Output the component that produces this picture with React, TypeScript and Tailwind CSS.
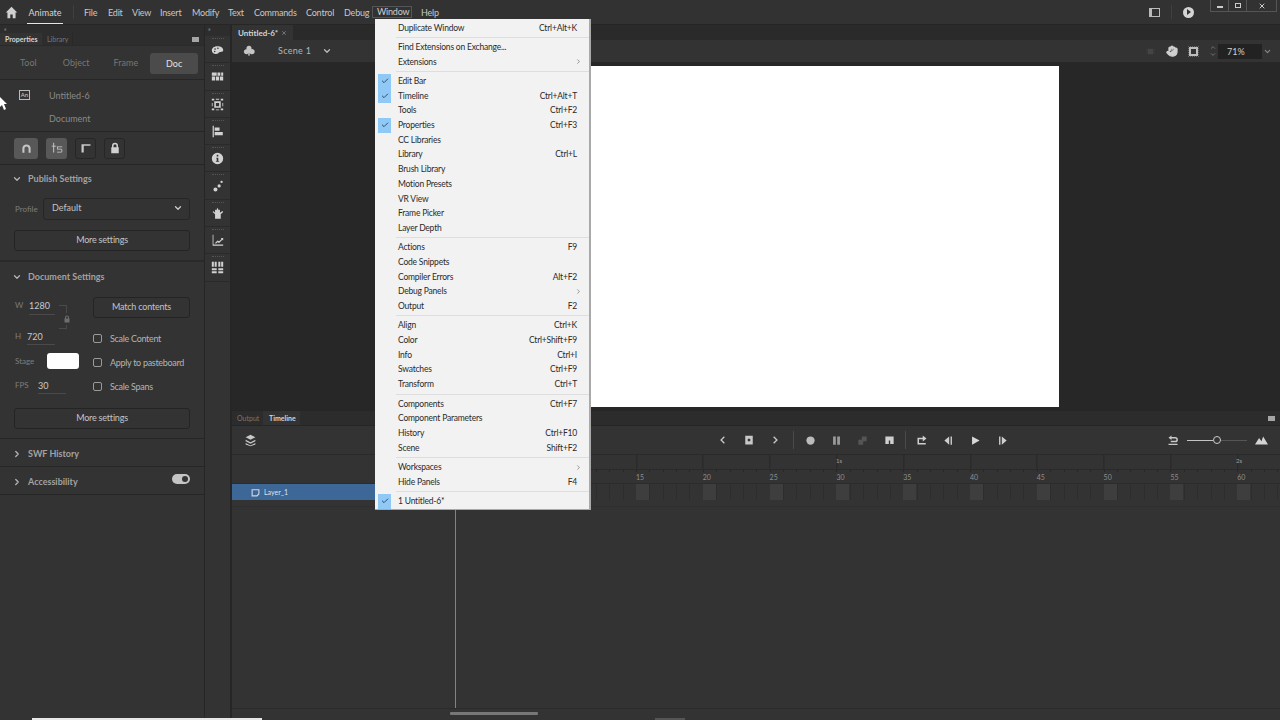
import { Check, ChevronDown, ChevronRight, ChevronUp, Hand, X } from "lucide-react";
import type { ReactNode } from "react";

const FONT = "font-['Lato',sans-serif]";

const topMenu: [string, string][] = [
	["File", "w-[24px]"],
	["Edit", "w-[24px]"],
	["View", "w-[28px]"],
	["Insert", "w-[32px]"],
	["Modify", "w-[36px]"],
	["Text", "w-[26px]"],
	["Commands", "w-[52px]"],
	["Control", "w-[38px]"],
	["Debug", "w-[36px]"],
];

type MenuRow = { label: string; keys?: string; checked?: boolean; sub?: boolean } | "sep";

const windowMenu: MenuRow[] = [
	{ label: "Duplicate Window", keys: "Ctrl+Alt+K" },
	"sep",
	{ label: "Find Extensions on Exchange..." },
	{ label: "Extensions", sub: true },
	"sep",
	{ label: "Edit Bar", checked: true },
	{ label: "Timeline", keys: "Ctrl+Alt+T", checked: true },
	{ label: "Tools", keys: "Ctrl+F2" },
	{ label: "Properties", keys: "Ctrl+F3", checked: true },
	{ label: "CC Libraries" },
	{ label: "Library", keys: "Ctrl+L" },
	{ label: "Brush Library" },
	{ label: "Motion Presets" },
	{ label: "VR View" },
	{ label: "Frame Picker" },
	{ label: "Layer Depth" },
	"sep",
	{ label: "Actions", keys: "F9" },
	{ label: "Code Snippets" },
	{ label: "Compiler Errors", keys: "Alt+F2" },
	{ label: "Debug Panels", sub: true },
	{ label: "Output", keys: "F2" },
	"sep",
	{ label: "Align", keys: "Ctrl+K" },
	{ label: "Color", keys: "Ctrl+Shift+F9" },
	{ label: "Info", keys: "Ctrl+I" },
	{ label: "Swatches", keys: "Ctrl+F9" },
	{ label: "Transform", keys: "Ctrl+T" },
	"sep",
	{ label: "Components", keys: "Ctrl+F7" },
	{ label: "Component Parameters" },
	{ label: "History", keys: "Ctrl+F10" },
	{ label: "Scene", keys: "Shift+F2" },
	"sep",
	{ label: "Workspaces", sub: true },
	{ label: "Hide Panels", keys: "F4" },
	"sep",
	{ label: "1 Untitled-6*", checked: true },
];

const Icon = ({ children, className = "w-3 h-3 text-[#c8c8c8]" }: { children: ReactNode; className?: string }) => (
	<svg viewBox="0 0 16 16" fill="currentColor" className={className}>
		{children}
	</svg>
);

const stripIcons: ReactNode[] = [
	<path key="a" fillRule="evenodd" d="M1 9c0-3 3-5 7-5s7 2 7 4.500-2 2-4 2.500-2 2.500-5 2.500S1 12 1 9zM4 7.500a1 1 0 102 0 1 1 0 10-2 0zM7.500 6.500a1 1 0 102 0 1 1 0 10-2 0zM3.500 10.500a1 1 0 102 0 1 1 0 10-2 0z" />,
	<path key="b" d="M1 3h6v4H1zM8 3h3.500v4H8zM12.500 3H15v4h-2.500zM1 8h4v5H1zM6 8h4v5H6zM11 8h4v5h-4z" />,
	<path key="c" fillRule="evenodd" d="M1 1h3v2H1zM12 1h3v2h-3zM1 13h3v2H1zM12 13h3v2h-3zM6 1h4v1H6zM6 14h4v1H6zM1 6h1v4H1zM14 6h1v4h-1zM4 4h8v8H4zM6 6v4h4V6z" />,
	<path key="d" d="M2 1h1.500v14H2zM4.500 3h6v4h-6zM4.500 8.500h10v4h-10z" />,
	<path key="e" fillRule="evenodd" d="M8 1a7 7 0 110 14A7 7 0 018 1zM7 3.500v2h2v-2zM6.500 7v1H7v3H6v1h4v-1H9V7z" />,
	<path key="f" d="M3 13a2.500 2.500 0 105 0 2.500 2.500 0 10-5 0zM8 8.500a2 2 0 104 0 2 2 0 10-4 0zM11.500 3.500a1.500 1.500 0 103 0 1.500 1.500 0 10-3 0z" />,
	<path key="g" d="M5 7V3l1.500 1L8 1l1.500 3L11 3v4l3-2 1 1-3 3v5.500H5V9L2 6l1-1z" />,
	<path key="h" fillRule="evenodd" d="M2 1h1v12h12v1.500H2zM5 11l3-3 2 1 3-3-1-1h3v3l-1-1-4 4-2-1-2 2z" />,
	<path key="i" fillRule="evenodd" d="M1 1h6v6H1zM9 1h6v6H9zM1 9h6v6H1zM9 9h6v6H9zM3.500 1v6h1V1zM11.500 1v6h1V1zM1 11.500v1h6v-1zM9 11.500v1h6v-1z" />,
];

const PanelBtn = ({ children, className = "" }: { children: ReactNode; className?: string }) => (
	<div className={`h-[21px] flex items-center justify-center rounded-[3px] border border-[#242424] text-[9px] tracking-[-0.2px] text-[#c4c4c4] ${className}`}>
		{children}
	</div>
);

const SectionHead = ({ label, open = true }: { label: string; open?: boolean }) => (
	<div className="flex items-center gap-[6px] pl-[12px] text-[9px] font-bold text-[#a2a2a2]">
		{open ? (
			<ChevronDown strokeWidth={3} className="w-[10px] h-[10px] text-[#b5b5b5]" />
		) : (
			<ChevronRight strokeWidth={3} className="w-[10px] h-[10px] text-[#b5b5b5]" />
		)}
		<span>{label}</span>
	</div>
);

const CheckRow = ({ label }: { label: string }) => (
	<div className="flex items-center gap-[8px] text-[9px] tracking-[-0.3px] text-[#b4b4b4] whitespace-nowrap">
		<span className="w-[9px] h-[9px] rounded-[2px] border border-[#9a9a9a]" />
		<span>{label}</span>
	</div>
);

const LeftPanel = () => (
	<div className="w-[205px] shrink-0 flex flex-col border-r border-[#262626] bg-[#333]">
		<div className="h-[8px] bg-[#2d2d2d] pl-[4px] text-[6px] leading-[8px] text-[#aaa]">«</div>
		<div className="h-[13px] flex bg-[#2d2d2d] items-stretch border-b border-[#2a2a2a] relative">
			<div className="w-[42px] bg-[#333] pl-[5px] text-[7px] leading-[13px] font-bold text-[#d5d5d5]">Properties</div>
			<div className="w-[31px] border-r border-[#282828] pl-[5px] text-[7px] leading-[13px] text-[#777]">Library</div>
			<div className="ml-auto mr-[5px] mt-[4px] w-[7px] h-[5px] bg-[#a5a5a5]" />
		</div>
		<div className="h-[34px] flex items-center border-b border-[#262626] pl-[6px] pr-[6px] pt-[1px] text-[9px] text-[#777]">
			<span className="w-[45px] text-center">Tool</span>
			<span className="w-[51px] text-center">Object</span>
			<span className="w-[49px] text-center">Frame</span>
			<span className="w-[48px] h-[21px] rounded-[3px] bg-[#4b4b4b] text-[#e2e2e2] leading-[21px] text-center">Doc</span>
		</div>
		<div className="h-[52px] border-b border-[#262626] relative text-[9px] text-[#8a8a8a]">
			<div className="absolute left-[19px] top-[10px] w-[11px] h-[10px] border border-[#bbb] text-[6px] leading-[8px] text-center text-[#ccc]">An</div>
			<div className="pl-[49px] pt-[9px] leading-[13px]">Untitled-6</div>
			<div className="pl-[49px] pt-[10px] leading-[13px]">Document</div>
		</div>
		<div className="h-[33px] border-b border-[#262626] flex items-center pl-[14px] gap-[8px]">
			<div className="w-[24px] h-[21px] rounded-[3px] bg-[#585858] flex items-center justify-center">
				<Icon className="w-[11px] h-[11px] text-[#c5c5c5]">
					<path d="M2 14V8a6 6 0 0112 0v6h-3V8a3 3 0 00-6 0v6z" />
				</Icon>
			</div>
			<div className="w-[21px] h-[21px] rounded-[3px] bg-[#585858] flex items-center justify-center">
				<Icon className="w-[12px] h-[12px] text-[#d0d0d0]">
					<path d="M3 1h1.200v4H7v1H4.200v8H3V6H1V5h2zM8 6h7v1H9v2h5l1 1v3l-1 1H8v-1h6v-3H8z" />
				</Icon>
			</div>
			<div className="w-[21px] h-[21px] rounded-[3px] border border-[#262626] flex items-center justify-center">
				<Icon className="w-[12px] h-[12px] text-[#c8c8c8]">
					<path d="M2 3h12v2H5v9H2z" />
				</Icon>
			</div>
			<div className="w-[21px] h-[21px] rounded-[3px] border border-[#262626] flex items-center justify-center">
				<Icon className="w-[12px] h-[12px] text-[#d0d0d0]">
					<path fillRule="evenodd" d="M3 7h1V5a4 4 0 018 0v2h1v8H3zM6 7h4V5a2 2 0 00-4 0z" />
				</Icon>
			</div>
		</div>
		<div className="h-[97px] border-b-2 border-[#2a2a2a] pt-[7px] flex flex-col">
			<SectionHead label="Publish Settings" />
			<div className="flex items-center mt-[12px] pl-[15px] pr-[14px] text-[8px] text-[#7d7d7d]">
				<span className="w-[28px]">Profile</span>
				<div className="flex-1 h-[22px] rounded-[3px] border border-[#262626] flex items-center justify-between pl-[8px] pr-[6px] pb-[1px] text-[9px] text-[#c2c2c2]">
					Default
					<ChevronDown strokeWidth={3} className="w-[10px] h-[10px] text-[#ccc]" />
				</div>
			</div>
			<PanelBtn className="mx-[14px] mt-[10px]">More settings</PanelBtn>
		</div>
		<div className="h-[177px] border-b border-[#262626] pt-[8px] flex flex-col">
			<SectionHead label="Document Settings" />
			<div className="flex mt-[14px] pl-[15px] pr-[14px]">
				<div className="w-[78px] text-[8px] text-[#7d7d7d] relative">
					<div className="h-[32px] flex pt-[1px]">
						<span className="w-[14px] leading-[13px]">W</span>
						<span className="w-[26px] h-[16px] border-b border-[#4a4a4a] text-[9px] leading-[13px] text-[#c9c9c9]">1280</span>
					</div>
					<div className="h-[19px] flex">
						<span className="w-[12px] leading-[13px]">H</span>
						<span className="w-[28px] h-[15px] border-b border-[#4a4a4a] text-[9px] leading-[13px] text-[#c9c9c9]">720</span>
					</div>
					<div className="h-[24px] flex items-center">
						<span className="w-[32px]">Stage</span>
						<span className="w-[32px] h-[16px] rounded-[3px] bg-white" />
					</div>
					<div className="h-[24px] flex pt-[6px]">
						<span className="w-[23px] leading-[13px]">FPS</span>
						<span className="w-[28px] h-[15px] border-b border-[#4a4a4a] text-[9px] leading-[13px] text-[#c9c9c9]">30</span>
					</div>
					<div className="absolute left-[44px] top-[7px] w-[8px] h-[24px] border-r border-t border-b border-[#4a4a4a]" />
					<div className="absolute left-[48px] top-[15px] bg-[#333] py-[2px]">
						<Icon className="w-[8px] h-[8px] text-[#6e6e6e]">
							<path fillRule="evenodd" d="M3 7h1V5a4 4 0 018 0v2h1v8H3zM6 7h4V5a2 2 0 00-4 0z" />
						</Icon>
					</div>
				</div>
				<div className="flex-1 flex flex-col">
					<PanelBtn className="-mt-[1px]">Match contents</PanelBtn>
					<div className="mt-[14px] h-[14px]"><CheckRow label="Scale Content" /></div>
					<div className="mt-[10px] h-[14px]"><CheckRow label="Apply to pasteboard" /></div>
					<div className="mt-[10px] h-[14px]"><CheckRow label="Scale Spans" /></div>
				</div>
			</div>
			<PanelBtn className="mx-[14px] mt-[11px]">More settings</PanelBtn>
		</div>
		<div className="h-[28px] border-b border-[#262626] flex items-center pt-[2px]">
			<SectionHead label="SWF History" open={false} />
		</div>
		<div className="h-[28px] border-b border-[#262626] flex items-center justify-between pr-[14px] pt-[2px]">
			<SectionHead label="Accessibility" open={false} />
			<div className="w-[18px] h-[10px] rounded-full bg-[#c4c4c4] flex items-center justify-end pr-[2px] -mt-[6px]">
				<span className="w-[6px] h-[6px] rounded-full bg-[#333]" />
			</div>
		</div>
	</div>
);

const ToolStrip = () => (
	<div className="w-[27px] shrink-0 border-r-2 border-[#262626] bg-[#333] flex flex-col">
		<div className="h-[11px] bg-[#2d2d2d] pl-[3px] text-[6px] leading-[8px] text-[#aaa]">»</div>
		{stripIcons.map((icon, i) => (
			<div key={i} className="h-[27.300px] border-b border-[#2a2a2a] flex flex-col items-center pt-[2px]">
				<div className="w-[12px] h-px border-t border-dotted border-[#555]" />
				<Icon className="w-[13px] h-[13px] mt-[4px] text-[#d2d2d2]">{icon}</Icon>
			</div>
		))}
	</div>
);

const EditBar = () => (
	<>
		<div className="h-[15px] bg-[#2a2a2a] flex">
			<div className="w-[61px] bg-[#333] flex items-center pl-[6px] text-[8px] font-bold text-[#d4d4d4]">
				<span className="w-[43px]">Untitled-6*</span>
				<X strokeWidth={2.5} className="w-[6px] h-[6px] text-[#999]" />
			</div>
		</div>
		<div className="h-[22px] bg-[#333] flex items-center">
			<Icon className="w-[12px] h-[12px] ml-[11px] text-[#c5c5c5]">
				<path d="M8 1a3.400 3.400 0 013.200 4.600A3.400 3.400 0 1110 11.500c-.6 0-1-.2-1.300-.5l.6 3H6.700l.6-3a3.400 3.400 0 11-2.500-5.400A3.400 3.400 0 018 1z" />
			</Icon>
			<span className="ml-[23px] w-[44px] text-[9px] text-[#b5b5b5] tracking-[0.3px]">Scene 1</span>
			<ChevronDown strokeWidth={3} className="w-[10px] h-[10px] text-[#bbb]" />
			<div className="ml-auto flex items-center pr-[8px]">
				<Icon className="w-[9px] h-[9px] text-[#444]">
					<path d="M3 3h10v10H3zM0 5h2v1H0zM0 10h2v1H0zM14 5h2v1h-2zM14 10h2v1h-2z" />
				</Icon>
				<Hand strokeWidth={2.5} className="w-[12px] h-[12px] ml-[11px] text-[#d0d0d0] fill-[#d0d0d0]" />
				<div className="ml-[11px] w-[9px] h-[9px] border-2 border-[#bdbdbd] outline-1 outline-dotted outline-[#666]" />
				<div className="ml-[11px] flex flex-col text-[#999]">
					<ChevronUp strokeWidth={2} className="w-[8px] h-[7px]" />
					<ChevronDown strokeWidth={2} className="w-[8px] h-[7px]" />
				</div>
				<div className="ml-[1px] w-[44px] h-[15px] bg-[#222] text-[9px] leading-[15px] pl-[9px] text-[#cfcfcf]">71%</div>
				<ChevronDown strokeWidth={3} className="ml-[1px] w-[9px] h-[9px] text-[#888]" />
			</div>
		</div>
	</>
);

const Stage = () => (
	<div className="h-[348px] bg-[#272727] pt-[4px] pl-[221px]">
		<div className="w-[606px] h-[341px] bg-white" />
	</div>
);

const Timeline = () => {
	const groups = [15, 20, 25, 30, 35, 40, 45, 50, 55, 60];
	return (
		<div className="flex-1 flex flex-col bg-[#333] border-t border-[#262626]">
			<div className="h-[15px] flex bg-[#2c2c2c] items-stretch border-b border-[#262626]">
				<div className="w-[31px] pl-[5px] text-[7px] leading-[15px] text-[#777]">Output</div>
				<div className="w-[37px] bg-[#333] pl-[6px] text-[7px] leading-[15px] font-bold text-[#d5d5d5]">Timeline</div>
				<div className="ml-auto mr-[5px] mt-[5px] w-[7px] h-[5px] bg-[#a5a5a5]" />
			</div>
			<div className="h-[29px] flex items-center border-b border-[#2a2a2a] pl-[12px]">
				<Icon className="w-[13px] h-[13px] text-[#c8c8c8]">
					<path d="M8 1l6 3-6 3-6-3zM2 7l6 3 6-3v2l-6 3-6-3zM2 11l6 3 6-3v2l-6 2-6-2z" />
				</Icon>
				<div className="ml-[460px] flex items-center">
					<Icon className="w-[10px] h-[10px] mr-[17px] text-[#c8c8c8]"><path d="M11 2L5 8l6 6 1.500-1.500L8 8l4.500-4.500z" /></Icon>
					<Icon className="w-[10px] h-[10px] mr-[17px] text-[#c8c8c8]"><path fillRule="evenodd" d="M2 1h12v14H2zM6 6v4h4V6z" /></Icon>
					<Icon className="w-[10px] h-[10px] mr-[13px] text-[#c8c8c8]"><path d="M5 2l6 6-6 6-1.500-1.500L8 8 3.500 3.500z" /></Icon>
					<div className="w-px h-[18px] bg-[#4a4a4a] mr-[11px] -ml-[1px]" />
					<Icon className="w-[11px] h-[11px] mr-[15px] text-[#bcbcbc]"><circle cx="8" cy="8" r="6" /></Icon>
					<Icon className="w-[11px] h-[11px] mr-[15px] text-[#9a9a9a]"><path d="M3 2h4v12H3zM9 2h4v12H9z" /></Icon>
					<Icon className="w-[11px] h-[11px] mr-[16px] text-[#555]"><path d="M7 2h7v7H7zM2 7h7v7H2z" /></Icon>
					<Icon className="w-[11px] h-[11px] mr-[10px] text-[#cfcfcf]"><path d="M2 2h12v11H9V8H7v5H2z" /></Icon>
					<div className="w-px h-[18px] bg-[#4a4a4a] mr-[10px]" />
					<Icon className="w-[12px] h-[12px] mr-[15px] text-[#cfcfcf]"><path d="M2 5h7V2l5 4-5 4V7H4v5h9v2H2z" /></Icon>
					<Icon className="w-[11px] h-[11px] mr-[16px] text-[#cfcfcf]"><path d="M13 2v12h-2V2zM9 2v12L2 8z" /></Icon>
					<Icon className="w-[11px] h-[11px] mr-[16px] text-[#d8d8d8]"><path d="M3 2l11 6-11 6z" /></Icon>
					<Icon className="w-[11px] h-[11px] text-[#cfcfcf]"><path d="M3 2v12h2V2zM7 2v12l7-6z" /></Icon>
				</div>
				<div className="ml-auto flex items-center pr-[12px]">
					<Icon className="w-[12px] h-[12px] text-[#c8c8c8]"><path d="M2 5l4-3v2h5a3.500 3.500 0 010 7H5V9h6a1.500 1.500 0 000-3H6v2zM2 13h12v1.500H2z" /></Icon>
					<div className="ml-[8px] w-[26px] h-px bg-[#c4c4c4]" />
					<div className="w-[8px] h-[8px] rounded-full border border-[#ccc]" />
					<div className="w-[26px] h-px bg-[#555]" />
					<Icon className="ml-[8px] w-[13px] h-[13px] text-[#d4d4d4]"><path d="M0 13l5-8 3 4 2-6 6 10z" /></Icon>
				</div>
			</div>
			<div className="flex border-b border-[#2c2c2c]">
				<div className="w-[217px] h-[28px] shrink-0" />
				<div className="flex-1 flex flex-col h-[28px] overflow-hidden">
					<div className="h-[15px] border-b border-[#2a2a2a] bg-[repeating-linear-gradient(90deg,#262626_0,#262626_1px,transparent_1px,transparent_66.800px)] bg-[position:53.400px_0] relative">
						<span className="absolute left-[387px] top-[2px] text-[6px] leading-[8px] text-[#a0a0a0]">1s</span>
						<span className="absolute left-[787px] top-[2px] text-[6px] leading-[8px] text-[#a0a0a0]">2s</span>
					</div>
					<div className="h-[2px] bg-[repeating-linear-gradient(90deg,#262626_0,#262626_1px,transparent_1px,transparent_13.360px)]" />
					<div className="flex pl-[187px]">
						{groups.map(n => (
							<span key={n} className="w-[66.800px] shrink-0 text-[7px] leading-[10px] text-[#8e8e8e]">
								{n}
							</span>
						))}
					</div>
				</div>
			</div>
			<div className="flex h-[23px] border-b border-[#2f2f2f]">
				<div className="w-[217px] h-[16px] shrink-0 bg-[#3c6797] flex items-center pl-[19px] gap-[4px] text-[7px] text-[#dde4ec]">
					<Icon className="w-[9px] h-[9px] text-[#cfd8e2]"><path fillRule="evenodd" d="M1 2h14v9l-4 4H1zM3 4v9h7l3-3V4z" /></Icon>
					Layer_1
				</div>
				<div className="flex-1 h-[16px] flex pl-[187px] bg-[repeating-linear-gradient(90deg,#2d2d2d_0,#2d2d2d_1px,transparent_1px,transparent_13.360px)] overflow-hidden">
					{groups.map(n => (
						<div key={n} className="w-[66.800px] shrink-0">
							<div className="w-[13px] h-[16px] bg-[#3e3e3e]" />
						</div>
					))}
				</div>
			</div>
			<div className="flex-1 flex relative">
				<div className="absolute left-[223px] top-0 bottom-0 w-px bg-[#6f87a3]" />
			</div>
			<div className="h-[12px] border-t border-[#2a2a2a] pt-[3px] pl-[218px]">
				<div className="w-[88px] h-[3px] bg-[#777] rounded-[1px]" />
			</div>
		</div>
	);
};

const WindowMenu = () => (
	<div className="absolute left-[375px] top-[19px] w-[216px] h-[491px] bg-[#f2f2f2] border-r-2 border-b border-[#a9a9a9] pt-[1.500px] text-[8.500px] tracking-[-0.2px] text-[#2a2a2a]">
		{windowMenu.map((row, i) =>
			row === "sep" ? (
				<div key={i} className="h-[4.700px] pl-[21px] flex items-center">
					<div className="w-full h-px bg-[#dedede]" />
				</div>
			) : (
				<div key={i} className="h-[14.700px] flex items-center leading-none">
					<div className={`ml-[3px] w-[13px] h-full flex items-center justify-center ${row.checked ? "bg-[#90c8f6]" : ""}`}>
						{row.checked && <Check strokeWidth={2.5} className="w-[8px] h-[8px] text-[#1d3650]" />}
					</div>
					<span className="ml-[7px]">{row.label}</span>
					{row.keys && <span className="ml-auto mr-[12px]">{row.keys}</span>}
					{row.sub && <ChevronRight strokeWidth={2} className="ml-auto mr-[7px] w-[7px] h-[7px] text-[#555]" />}
				</div>
			),
		)}
	</div>
);

const TopBar = () => (
	<div className="h-[25px] shrink-0 flex items-center bg-[#323232] border-b border-[#262626]">
		<Icon className="w-[13px] h-[13px] ml-[5px] text-[#d0d0d0]">
			<path d="M8 1l7 7h-2v7H9.500v-4.500h-3V15H3V8H1z" />
		</Icon>
		<div className="ml-[9px] w-[36px] h-[24px] border-b border-[#e5e5e5] text-center text-[9px] leading-[26px] text-[#d5d5d5]">Animate</div>
		<div className="ml-[10px] w-px h-[14px] bg-[#3f3f3f]" />
		<div className="ml-[10px] flex pt-[1px] text-[9px] tracking-[-0.2px] text-[#c8c8c8]">
			{topMenu.map(([label, w]) => (
				<span key={label} className={w}>{label}</span>
			))}
		</div>
		<span className="w-[40px] h-[12px] ml-[-8px] border border-[#555] pl-[4px] text-[9px] tracking-[-0.2px] leading-[10px] text-[#d0d0d0]">Window</span>
		<span className="ml-[9px] pt-[1px] text-[9px] tracking-[-0.2px] text-[#c8c8c8]">Help</span>
		<div className="ml-auto flex items-center h-full">
			<div className="w-[11px] h-[9px] border border-[#bbb] border-l-[3px]" />
			<div className="ml-[11px] w-px h-[14px] bg-[#3f3f3f]" />
			<div className="ml-[11px] w-[11px] h-[11px] rounded-full bg-[#d5d5d5] flex items-center justify-center">
				<span className="border-l-[4px] border-y-[3px] border-y-transparent border-l-[#333]" />
			</div>
			<div className="ml-[16px] mr-[3px] self-start flex w-[67px] h-[12px] border-l border-b border-r border-[#555] text-[#ccc]">
				<div className="w-[18px] border-r border-[#555] flex items-end justify-center pb-[3px]"><span className="w-[6px] h-[2px] bg-[#ccc]" /></div>
				<div className="w-[18px] border-r border-[#555] flex items-center justify-center"><span className="w-[6px] h-[5px] border border-[#ccc]" /></div>
				<div className="flex-1 flex items-center justify-center"><X strokeWidth={3} className="w-[8px] h-[8px]" /></div>
			</div>
		</div>
	</div>
);

export default function App() {
	return (
		<div className={`relative w-[1280px] h-[720px] overflow-hidden flex flex-col bg-[#333] ${FONT}`}>
			<TopBar />
			<div className="flex-1 flex min-h-0">
				<LeftPanel />
				<ToolStrip />
				<div className="flex-1 flex flex-col min-w-0">
					<EditBar />
					<Stage />
					<Timeline />
				</div>
			</div>
			<WindowMenu />
			<svg viewBox="0 0 8 13" className="absolute left-0 top-[97px] w-[8px] h-[13px]">
				<path d="M0 0l7 7H4l2 5-2 1-2-5-2 2z" fill="#fff" />
			</svg>
			<div className="absolute left-[32px] bottom-0 w-[230px] h-[2px] bg-[#e8e8e8]" />
			<div className="absolute left-[655px] bottom-0 w-[30px] h-[2px] bg-[#555]" />
		</div>
	);
}
